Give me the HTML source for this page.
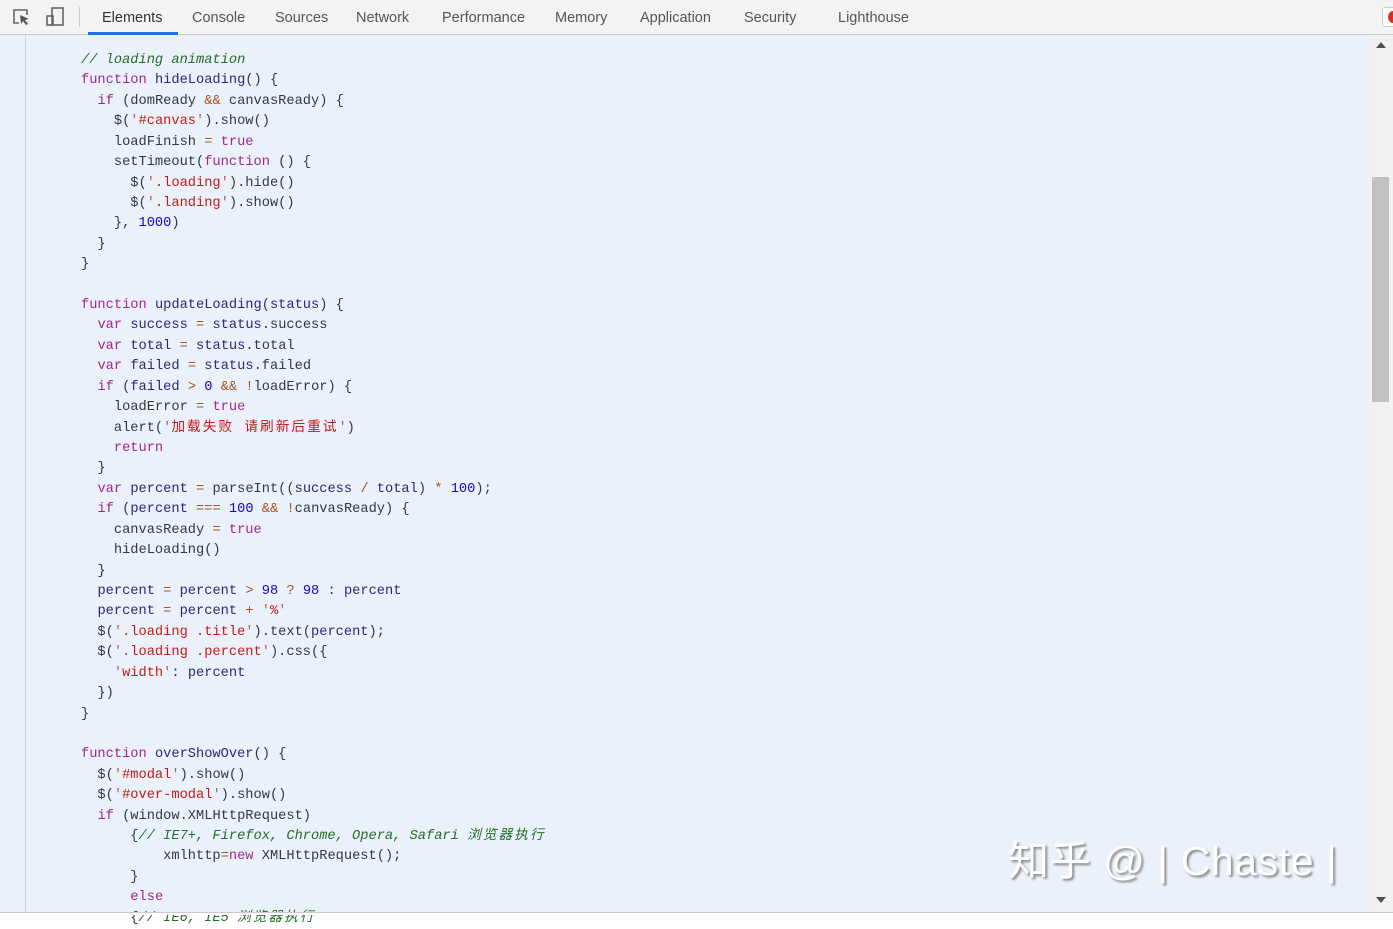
<!DOCTYPE html>
<html><head><meta charset="utf-8"><style>
*{margin:0;padding:0;box-sizing:border-box}
body{width:1393px;height:915px;overflow:hidden;background:#fff;font-family:"Liberation Sans",sans-serif;position:relative}
.tb{position:absolute;left:0;top:0;width:1393px;height:35px;background:#f3f3f3;border-bottom:1px solid #cbcbcb}
.tab{position:absolute;top:10px;font-size:14.5px;color:#555}
.main{position:absolute;left:0;top:35px;width:1369px;height:877px;background:#ebf1fa}
.gut{position:absolute;left:25px;top:35px;width:1px;height:877px;background:#c7d3e8}
pre{position:absolute;left:81px;top:51px;font-family:"Liberation Mono","Noto Sans CJK SC",monospace;font-size:13.7px;line-height:20.42px;color:#303942;white-space:pre}
.k{color:#a1268f}.v{color:#262a77}.s{color:#c41a16}.q{color:#b06060}.n{color:#1c00cf}.o{color:#a3551f}.c{color:#236e25;font-style:italic}
.z{letter-spacing:2px}
.sb{position:absolute;left:1369px;top:35px;width:24px;height:877px;background:#f1f1f1}
.th{position:absolute;left:1372px;top:177px;width:17px;height:225px;background:#c1c1c1}
.wm{position:absolute;left:1008px;top:827px;font-size:41px;letter-spacing:0.6px;color:#fff;text-shadow:2px 2px 2px #8a8a8a;font-family:"Liberation Sans","Noto Sans CJK SC",sans-serif}
</style></head><body>
<div class="tb">
<svg style="position:absolute;left:12px;top:8px" width="20" height="20" viewBox="0 0 20 20"><path d="M7 15H2V2h13v5" fill="none" stroke="#666" stroke-width="1.6"/><path d="M8 7l9 4-4 1 3 4-2 1-3-4-2 3z" fill="#555"/></svg>
<svg style="position:absolute;left:45px;top:6px" width="22" height="22" viewBox="0 0 22 22"><rect x="7" y="2" width="11" height="17" fill="none" stroke="#666" stroke-width="1.6"/><rect x="2" y="10" width="6" height="9" fill="none" stroke="#666" stroke-width="1.6"/></svg>
<div style="position:absolute;left:79px;top:7px;width:1px;height:20px;background:#ccc"></div>
<div class="tab" style="left:102px;color:#333">Elements</div>
<div style="position:absolute;left:88px;top:32px;width:90px;height:3px;background:#1a73e8"></div>
<div class="tab" style="left:192px">Console</div>
<div class="tab" style="left:275px">Sources</div>
<div class="tab" style="left:356px">Network</div>
<div class="tab" style="left:442px">Performance</div>
<div class="tab" style="left:555px">Memory</div>
<div class="tab" style="left:640px">Application</div>
<div class="tab" style="left:744px">Security</div>
<div class="tab" style="left:838px">Lighthouse</div>
<div style="position:absolute;left:1382px;top:7px;width:14px;height:20px;border:1px solid #ccc;border-radius:3px;background:#fff"></div>
<div style="position:absolute;left:1388px;top:11px;width:10px;height:12px;border-radius:50%;background:#d93025"></div>
</div>
<div class="main"></div>
<div class="gut"></div>
<pre><span class="c">// loading animation</span>
<span class="k">function</span> <span class="v">hideLoading</span>() {
  <span class="k">if</span> (domReady <span class="o">&amp;&amp;</span> canvasReady) {
    $(<span class="q">'</span><span class="s">#canvas</span><span class="q">'</span>).show()
    loadFinish <span class="o">=</span> <span class="k">true</span>
    setTimeout(<span class="k">function</span> () {
      $(<span class="q">'</span><span class="s">.loading</span><span class="q">'</span>).hide()
      $(<span class="q">'</span><span class="s">.landing</span><span class="q">'</span>).show()
    }, <span class="n">1000</span>)
  }
}

<span class="k">function</span> <span class="v">updateLoading</span>(<span class="v">status</span>) {
  <span class="k">var</span> <span class="v">success</span> <span class="o">=</span> <span class="v">status</span>.success
  <span class="k">var</span> <span class="v">total</span> <span class="o">=</span> <span class="v">status</span>.total
  <span class="k">var</span> <span class="v">failed</span> <span class="o">=</span> <span class="v">status</span>.failed
  <span class="k">if</span> (<span class="v">failed</span> <span class="o">&gt;</span> <span class="n">0</span> <span class="o">&amp;&amp;</span> <span class="o">!</span>loadError) {
    loadError <span class="o">=</span> <span class="k">true</span>
    alert(<span class="q">'</span><span class="s z">加载失败 请刷新后重试</span><span class="q">'</span>)
    <span class="k">return</span>
  }
  <span class="k">var</span> <span class="v">percent</span> <span class="o">=</span> parseInt((<span class="v">success</span> <span class="o">/</span> <span class="v">total</span>) <span class="o">*</span> <span class="n">100</span>);
  <span class="k">if</span> (<span class="v">percent</span> <span class="o">===</span> <span class="n">100</span> <span class="o">&amp;&amp;</span> <span class="o">!</span>canvasReady) {
    canvasReady <span class="o">=</span> <span class="k">true</span>
    hideLoading()
  }
  <span class="v">percent</span> <span class="o">=</span> <span class="v">percent</span> <span class="o">&gt;</span> <span class="n">98</span> <span class="o">?</span> <span class="n">98</span> : <span class="v">percent</span>
  <span class="v">percent</span> <span class="o">=</span> <span class="v">percent</span> <span class="o">+</span> <span class="q">'</span><span class="s">%</span><span class="q">'</span>
  $(<span class="q">'</span><span class="s">.loading .title</span><span class="q">'</span>).text(<span class="v">percent</span>);
  $(<span class="q">'</span><span class="s">.loading .percent</span><span class="q">'</span>).css({
    <span class="q">'</span><span class="s">width</span><span class="q">'</span>: <span class="v">percent</span>
  })
}

<span class="k">function</span> <span class="v">overShowOver</span>() {
  $(<span class="q">'</span><span class="s">#modal</span><span class="q">'</span>).show()
  $(<span class="q">'</span><span class="s">#over-modal</span><span class="q">'</span>).show()
  <span class="k">if</span> (window.XMLHttpRequest)
      {<span class="c">// IE7+, Firefox, Chrome, Opera, Safari <span class="z">浏览器执行</span></span>
          xmlhttp<span class="o">=</span><span class="k">new</span> XMLHttpRequest();
      }
      <span class="k">else</span>
      {<span class="c">// IE6, IE5 <span class="z">浏览器执行</span></span></pre>
<div class="sb"></div>
<div class="th"></div>
<div style="position:absolute;left:1376px;top:42px;width:0;height:0;border-left:5px solid transparent;border-right:5px solid transparent;border-bottom:6px solid #505050"></div>
<div style="position:absolute;left:1376px;top:897px;width:0;height:0;border-left:5px solid transparent;border-right:5px solid transparent;border-top:6px solid #505050"></div>
<div style="position:absolute;left:0;top:912px;width:1393px;height:3px;background:#fff;border-top:1px solid #cbcbcb"></div>
<div class="wm">知乎 @ | Chaste |</div>
</body></html>
